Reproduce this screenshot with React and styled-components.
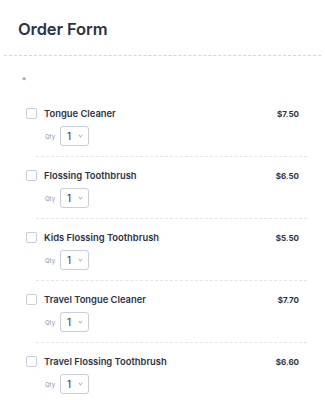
import React from "react";
import styled, { createGlobalStyle } from "styled-components";

const GlobalStyle = createGlobalStyle`
  body {
    margin: 0;
    background: #ffffff;
    font-family: Inter, "Noto Sans", sans-serif;
    color: #2c3345;
  }
`;

const StyledPage = styled.div`
  width: 325px;
  padding: 0 4px;
  box-sizing: border-box;
`;
const StyledHeader = styled.div`
  padding: 17px 14px 14px;
  border-bottom: 1px dashed #d3d6de;
`;
const StyledTitle = styled.h1`
  margin: 0;
  font-size: 16.5px;
  font-weight: 600;
  line-height: 24px;
  letter-spacing: -0.1px;
  color: #2c3345;
`;
const StyledRequired = styled.div`
  margin: 19px 0 0 18px;
  font-size: 8px;
  line-height: 10px;
  color: #6c7388;
`;
const StyledList = styled.ul`
  list-style: none;
  margin: 10px 0 0;
  padding: 0 14px 0 22px;
`;
const StyledItem = styled.li`
  padding-top: 12px;
  &:after {
    content: "";
    display: ${({ last }) => (last ? "none" : "block")};
    margin: 10px 0 0 10px;
    border-bottom: 1px dashed #e3e5ea;
  }
`;
const StyledRow = styled.div`
  display: flex;
  align-items: center;
  height: 13px;
`;
const StyledCheckbox = styled.span`
  width: 11px;
  height: 11px;
  box-sizing: border-box;
  border: 1px solid #c8ceda;
  border-radius: 2px;
  margin-right: 7px;
  flex-shrink: 0;
`;
const StyledName = styled.span`
  flex: 1;
  font-size: 9.4px;
  font-weight: 600;
  color: #2c3345;
`;
const StyledPrice = styled.span`
  font-size: 8px;
  font-weight: 700;
  margin-right: 8px;
  color: #2c3345;
`;
const StyledQtyRow = styled.div`
  display: flex;
  align-items: center;
  margin: 6px 0 0 19px;
`;
const StyledQtyLabel = styled.span`
  font-size: 6px;
  color: #8d93a5;
  margin-right: 5px;
`;
const StyledSelect = styled.div`
  width: 29px;
  height: 20px;
  border: 1px solid #c8ceda;
  border-radius: 3px;
  display: flex;
  align-items: center;
  padding-left: 6px;
  box-sizing: border-box;
  gap: 7px;
  font-size: 10px;
  color: #2c3345;
`;

const items = [
  { name: "Tongue Cleaner", price: "$7.50" },
  { name: "Flossing Toothbrush", price: "$6.50" },
  { name: "Kids Flossing Toothbrush", price: "$5.50" },
  { name: "Travel Tongue Cleaner", price: "$7.70" },
  { name: "Travel Flossing Toothbrush", price: "$6.60" },
];

const Chevron = () => (
  <svg width="5" height="4" viewBox="0 0 5 4" fill="none">
    <path d="M0.8 1.2l1.7 1.6 1.7-1.6" stroke="#6c7388" strokeWidth="0.8" />
  </svg>
);

const App = () => (
  <>
    <GlobalStyle />
    <StyledPage>
      <StyledHeader>
        <StyledTitle>Order Form</StyledTitle>
      </StyledHeader>
      <StyledRequired>*</StyledRequired>
      <StyledList>
        {items.map((item, i) => (
          <StyledItem key={item.name} last={i === items.length - 1}>
            <StyledRow>
              <StyledCheckbox />
              <StyledName>{item.name}</StyledName>
              <StyledPrice>{item.price}</StyledPrice>
            </StyledRow>
            <StyledQtyRow>
              <StyledQtyLabel>Qty</StyledQtyLabel>
              <StyledSelect>
                1
                <Chevron />
              </StyledSelect>
            </StyledQtyRow>
          </StyledItem>
        ))}
      </StyledList>
    </StyledPage>
  </>
);

export default App;
